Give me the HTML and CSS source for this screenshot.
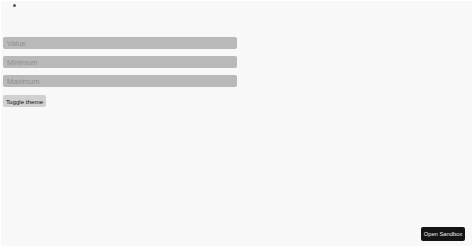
FILE: index.html
```html
<!DOCTYPE html>
<html>
<head>
<meta charset="utf-8">
<link rel="stylesheet" href="styles.css">
</head>
<body>
<div class="frame">
  <div class="app">
    <div class="top"><span class="dot"></span></div>
    <div class="fields">
      <input class="field" placeholder="Value">
      <input class="field" placeholder="Minimum">
      <input class="field" placeholder="Maximum">
    </div>
    <button class="toggle">Toggle theme</button>
  </div>
  <button class="sandbox">Open Sandbox</button>
</div>
</body>
</html>
```
FILE: styles.css
```css
html, body {
  margin: 0;
  padding: 0;
  background: #ffffff;
  font-family: "Liberation Sans", Arial, sans-serif;
}
.frame {
  position: relative;
  margin: 1px 2px 2px 1px;
  height: 245px;
  background: #f8f8f8;
  border-radius: 3px;
}
.app {
  padding: 0 0 0 2px;
  display: flex;
  flex-direction: column;
  align-items: flex-start;
}
.top {
  height: 36px;
  width: 100%;
}
.dot {
  display: block;
  width: 3px;
  height: 3px;
  margin: 3px 0 0 10px;
  background: #555;
  border-radius: 50%;
}
.fields {
  display: flex;
  flex-direction: column;
  gap: 7px;
}
.field {
  box-sizing: border-box;
  width: 234px;
  height: 12px;
  margin: 0;
  padding: 0 4px;
  border: none;
  border-radius: 2px;
  background: #b9b9b9;
  font-family: "Liberation Sans", Arial, sans-serif;
  font-size: 7.5px;
  color: #333;
  outline: none;
}
.field::placeholder {
  color: #8e8e8e;
}
.toggle {
  margin-top: 8px;
  box-sizing: border-box;
  width: 43px;
  height: 12px;
  padding: 0;
  border: none;
  border-radius: 2px;
  background: #d0d0d0;
  color: #111;
  font-family: "Liberation Sans", Arial, sans-serif;
  font-size: 6.2px;
  text-align: center;
}
.sandbox {
  position: absolute;
  right: 7px;
  bottom: 5px;
  box-sizing: border-box;
  width: 44px;
  height: 14px;
  padding: 0;
  border: none;
  border-radius: 2px;
  background: #141414;
  color: #f0f0f0;
  font-family: "Liberation Sans", Arial, sans-serif;
  font-size: 5.8px;
  text-align: center;
}
```
